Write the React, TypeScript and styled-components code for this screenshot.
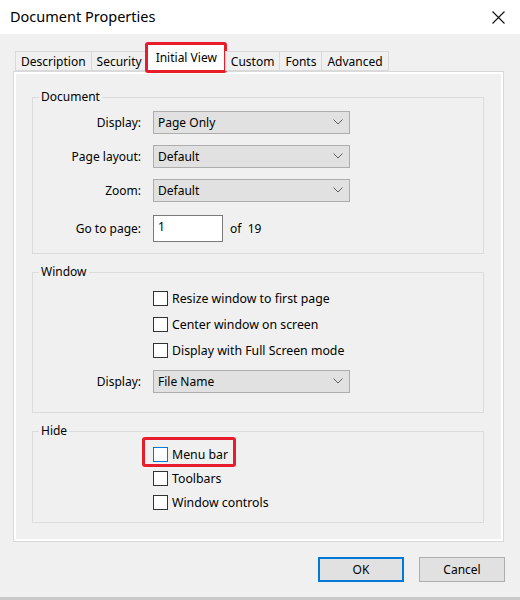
import styled, { createGlobalStyle } from 'styled-components';

const GlobalStyle = createGlobalStyle`
  html, body {
    margin: 0;
    padding: 0;
    height: 600px;
    overflow: hidden;
    background: #f0f0f0;
  }
  body {
    font-family: "Noto Sans", "Liberation Sans", sans-serif;
    font-size: 12px;
    color: #000;
  }
`

const Dialog = styled.div`
  width: 520px;
  height: 600px;
  display: flex;
  flex-direction: column;
  background: #f0f0f0;
  border-bottom: 3px solid #c9c9c9;
  box-sizing: border-box;
`

const TitleBar = styled.div`
  height: 34px;
  flex: none;
  display: flex;
  align-items: center;
  justify-content: space-between;
  padding: 0 15px 0 10px;
  background: #fff;
`

const Title = styled.div`
  font-size: 14.5px;
  color: #000;
  padding-bottom: 2px;
`

const Body = styled.div`
  flex: 1;
  display: flex;
  flex-direction: column;
  padding: 0 15px 0 13px;
`

const TabStrip = styled.div`
  display: flex;
  align-items: flex-end;
  height: 27px;
  margin-top: 10px;
  padding-left: 3px;
  position: relative;
  z-index: 1;
`

const Tab = styled.div<{ $active?: boolean }>`
  position: relative;
  box-sizing: border-box;
  height: ${p => (p.$active ? '28px' : '20px')};
  margin-bottom: ${p => (p.$active ? '-1px' : '0')};
  padding: ${p => (p.$active ? '4px 8px 0' : '1px 5px 0')};
  display: flex;
  align-items: ${p => (p.$active ? 'flex-start' : 'center')};
  background: ${p => (p.$active ? '#fff' : '#f0f0f0')};
  border: 1px solid #d9d9d9;
  border-bottom: ${p => (p.$active ? 'none' : '1px solid #d9d9d9')};
  margin-left: -1px;
  white-space: nowrap;
`

const Highlight = styled.span<{ $inset: string }>`
  position: absolute;
  inset: ${p => p.$inset};
  border: 3px solid #e81d2c;
  border-radius: 3px;
  pointer-events: none;
`

const Panel = styled.div`
  height: 471px;
  box-sizing: border-box;
  margin-right: 1px;
  border: 1px solid #d9d9d9;
  box-shadow: inset 0 0 0 2px #fff;
  padding: 17px 19px 0 18px;
  display: flex;
  flex-direction: column;
  gap: 10px;
`

const Group = styled.fieldset<{ $pt: number; $pb: number }>`
  margin: 0;
  border: 1px solid #dcdcdc;
  padding: ${p => p.$pt}px 0 ${p => p.$pb}px 0;
  display: flex;
  flex-direction: column;
`

const Legend = styled.legend`
  margin-left: 6px;
  padding: 0 2px;
  line-height: 16px;
`

const FieldRow = styled.div<{ $mt?: number }>`
  display: grid;
  grid-template-columns: 108px 197px;
  column-gap: 12px;
  align-items: center;
  margin-top: ${p => p.$mt ?? 0}px;
`

const Label = styled.label`
  text-align: right;
`

const Select = styled.div`
  height: 23px;
  box-sizing: border-box;
  border: 1px solid #adadad;
  background: #e1e1e1;
  display: flex;
  align-items: center;
  justify-content: space-between;
  padding: 0 6px 1px 4px;
`

const PageRow = styled.div`
  display: flex;
  align-items: center;
  gap: 7px;
`

const TextInput = styled.div`
  width: 70px;
  height: 27px;
  box-sizing: border-box;
  border: 1px solid #7a7a7a;
  background: #fff;
  padding: 2px 4px;
`

const CheckList = styled.div<{ $row: number }>`
  display: flex;
  flex-direction: column;
  padding-left: 120px;
  font-size: 12.3px;
  & > div {
    height: ${p => p.$row}px;
  }
`

const CheckRow = styled.div`
  position: relative;
  display: flex;
  align-items: center;
  gap: 4px;
  width: max-content;
`

const Box = styled.span<{ $focus?: boolean }>`
  width: 15px;
  height: 15px;
  box-sizing: border-box;
  border: 1px solid ${p => (p.$focus ? '#0078d7' : '#333')};
  background: #fff;
  flex: none;
`

const Footer = styled.div`
  display: flex;
  justify-content: flex-end;
  gap: 15px;
  margin-top: 15px;
`

const Button = styled.div<{ $default?: boolean }>`
  width: 86px;
  height: 25px;
  box-sizing: border-box;
  display: flex;
  align-items: center;
  justify-content: center;
  background: #e1e1e1;
  border: ${p => (p.$default ? '2px solid #0078d7' : '1px solid #adadad')};
`

const Chevron = () => (
  <svg width="10" height="6" viewBox="0 0 10 6">
    <path d="M0.5 0.5 L5 5 L9.5 0.5" fill="none" stroke="#606060" strokeWidth="1" />
  </svg>
)

const CloseIcon = () => (
  <svg width="13" height="13" viewBox="0 0 13 13">
    <path d="M0.5 0.5 L12.5 12.5 M12.5 0.5 L0.5 12.5" stroke="#111" strokeWidth="1.1" />
  </svg>
)

const tabs = ['Description', 'Security', 'Initial View', 'Custom', 'Fonts', 'Advanced']

export default function App() {
  return (
    <>
      <GlobalStyle />
      <Dialog>
        <TitleBar>
          <Title>Document Properties</Title>
          <CloseIcon />
        </TitleBar>
        <Body>
          <TabStrip>
            {tabs.map(t => (
              <Tab key={t} $active={t === 'Initial View'}>
                {t}
                {t === 'Initial View' && <Highlight $inset="-3px -2px -1px -3px" />}
              </Tab>
            ))}
          </TabStrip>
          <Panel>
            <Group $pt={6} $pb={11}>
              <Legend>Document</Legend>
              <FieldRow>
                <Label>Display:</Label>
                <Select>Page Only<Chevron /></Select>
              </FieldRow>
              <FieldRow $mt={11}>
                <Label>Page layout:</Label>
                <Select>Default<Chevron /></Select>
              </FieldRow>
              <FieldRow $mt={11}>
                <Label>Zoom:</Label>
                <Select>Default<Chevron /></Select>
              </FieldRow>
              <FieldRow $mt={13}>
                <Label>Go to page:</Label>
                <PageRow>
                  <TextInput>1</TextInput>
                  <span>of&nbsp;&nbsp;19</span>
                </PageRow>
              </FieldRow>
            </Group>

            <Group $pt={5} $pb={19}>
              <Legend>Window</Legend>
              <CheckList $row={26}>
                <CheckRow><Box />Resize window to first page</CheckRow>
                <CheckRow><Box />Center window on screen</CheckRow>
                <CheckRow><Box />Display with Full Screen mode</CheckRow>
              </CheckList>
              <FieldRow $mt={7}>
                <Label>Display:</Label>
                <Select>File Name<Chevron /></Select>
              </FieldRow>
            </Group>

            <Group $pt={3} $pb={8}>
              <Legend>Hide</Legend>
              <CheckList $row={24}>
                <CheckRow>
                  <Box $focus />Menu bar
                  <Highlight $inset="-5px -8px -1px -11px" />
                </CheckRow>
                <CheckRow><Box />Toolbars</CheckRow>
                <CheckRow><Box />Window controls</CheckRow>
              </CheckList>
            </Group>
          </Panel>
          <Footer>
            <Button $default>OK</Button>
            <Button>Cancel</Button>
          </Footer>
        </Body>
      </Dialog>
    </>
  )
}
